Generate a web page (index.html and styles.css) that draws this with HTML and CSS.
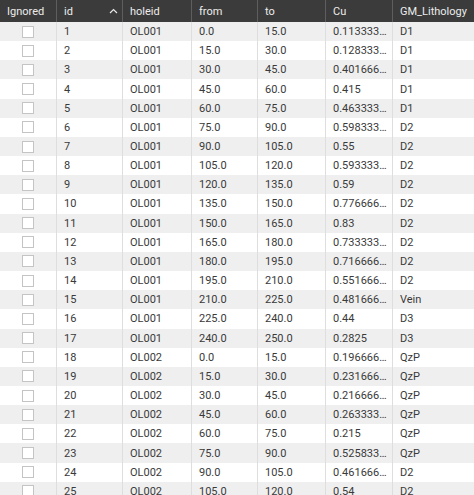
FILE: index.html
```html
<!DOCTYPE html>
<html>
<head>
<meta charset="utf-8">
<link rel="stylesheet" href="styles.css">
</head>
<body>
<div class="grid">
  <div class="row head">
    <div class="cell">Ignored</div>
    <div class="cell sorted">id<svg class="sort" width="9" height="6" viewBox="0 0 9 6"><path d="M1 5 L4.5 1.5 L8 5" fill="none" stroke="#e8e8e8" stroke-width="1.2"/></svg></div>
    <div class="cell">holeid</div>
    <div class="cell">from</div>
    <div class="cell">to</div>
    <div class="cell">Cu</div>
    <div class="cell">GM_Lithology</div>
  </div>
  <div class="row"><div class="cell chk"><span class="box"></span></div><div class="cell">1</div><div class="cell">OL001</div><div class="cell">0.0</div><div class="cell">15.0</div><div class="cell">0.113333…</div><div class="cell">D1</div></div>
  <div class="row"><div class="cell chk"><span class="box"></span></div><div class="cell">2</div><div class="cell">OL001</div><div class="cell">15.0</div><div class="cell">30.0</div><div class="cell">0.128333…</div><div class="cell">D1</div></div>
  <div class="row"><div class="cell chk"><span class="box"></span></div><div class="cell">3</div><div class="cell">OL001</div><div class="cell">30.0</div><div class="cell">45.0</div><div class="cell">0.401666…</div><div class="cell">D1</div></div>
  <div class="row"><div class="cell chk"><span class="box"></span></div><div class="cell">4</div><div class="cell">OL001</div><div class="cell">45.0</div><div class="cell">60.0</div><div class="cell">0.415</div><div class="cell">D1</div></div>
  <div class="row"><div class="cell chk"><span class="box"></span></div><div class="cell">5</div><div class="cell">OL001</div><div class="cell">60.0</div><div class="cell">75.0</div><div class="cell">0.463333…</div><div class="cell">D1</div></div>
  <div class="row"><div class="cell chk"><span class="box"></span></div><div class="cell">6</div><div class="cell">OL001</div><div class="cell">75.0</div><div class="cell">90.0</div><div class="cell">0.598333…</div><div class="cell">D2</div></div>
  <div class="row"><div class="cell chk"><span class="box"></span></div><div class="cell">7</div><div class="cell">OL001</div><div class="cell">90.0</div><div class="cell">105.0</div><div class="cell">0.55</div><div class="cell">D2</div></div>
  <div class="row"><div class="cell chk"><span class="box"></span></div><div class="cell">8</div><div class="cell">OL001</div><div class="cell">105.0</div><div class="cell">120.0</div><div class="cell">0.593333…</div><div class="cell">D2</div></div>
  <div class="row"><div class="cell chk"><span class="box"></span></div><div class="cell">9</div><div class="cell">OL001</div><div class="cell">120.0</div><div class="cell">135.0</div><div class="cell">0.59</div><div class="cell">D2</div></div>
  <div class="row"><div class="cell chk"><span class="box"></span></div><div class="cell">10</div><div class="cell">OL001</div><div class="cell">135.0</div><div class="cell">150.0</div><div class="cell">0.776666…</div><div class="cell">D2</div></div>
  <div class="row"><div class="cell chk"><span class="box"></span></div><div class="cell">11</div><div class="cell">OL001</div><div class="cell">150.0</div><div class="cell">165.0</div><div class="cell">0.83</div><div class="cell">D2</div></div>
  <div class="row"><div class="cell chk"><span class="box"></span></div><div class="cell">12</div><div class="cell">OL001</div><div class="cell">165.0</div><div class="cell">180.0</div><div class="cell">0.733333…</div><div class="cell">D2</div></div>
  <div class="row"><div class="cell chk"><span class="box"></span></div><div class="cell">13</div><div class="cell">OL001</div><div class="cell">180.0</div><div class="cell">195.0</div><div class="cell">0.716666…</div><div class="cell">D2</div></div>
  <div class="row"><div class="cell chk"><span class="box"></span></div><div class="cell">14</div><div class="cell">OL001</div><div class="cell">195.0</div><div class="cell">210.0</div><div class="cell">0.551666…</div><div class="cell">D2</div></div>
  <div class="row"><div class="cell chk"><span class="box"></span></div><div class="cell">15</div><div class="cell">OL001</div><div class="cell">210.0</div><div class="cell">225.0</div><div class="cell">0.481666…</div><div class="cell">Vein</div></div>
  <div class="row"><div class="cell chk"><span class="box"></span></div><div class="cell">16</div><div class="cell">OL001</div><div class="cell">225.0</div><div class="cell">240.0</div><div class="cell">0.44</div><div class="cell">D3</div></div>
  <div class="row"><div class="cell chk"><span class="box"></span></div><div class="cell">17</div><div class="cell">OL001</div><div class="cell">240.0</div><div class="cell">250.0</div><div class="cell">0.2825</div><div class="cell">D3</div></div>
  <div class="row"><div class="cell chk"><span class="box"></span></div><div class="cell">18</div><div class="cell">OL002</div><div class="cell">0.0</div><div class="cell">15.0</div><div class="cell">0.196666…</div><div class="cell">QzP</div></div>
  <div class="row"><div class="cell chk"><span class="box"></span></div><div class="cell">19</div><div class="cell">OL002</div><div class="cell">15.0</div><div class="cell">30.0</div><div class="cell">0.231666…</div><div class="cell">QzP</div></div>
  <div class="row"><div class="cell chk"><span class="box"></span></div><div class="cell">20</div><div class="cell">OL002</div><div class="cell">30.0</div><div class="cell">45.0</div><div class="cell">0.216666…</div><div class="cell">QzP</div></div>
  <div class="row"><div class="cell chk"><span class="box"></span></div><div class="cell">21</div><div class="cell">OL002</div><div class="cell">45.0</div><div class="cell">60.0</div><div class="cell">0.263333…</div><div class="cell">QzP</div></div>
  <div class="row"><div class="cell chk"><span class="box"></span></div><div class="cell">22</div><div class="cell">OL002</div><div class="cell">60.0</div><div class="cell">75.0</div><div class="cell">0.215</div><div class="cell">QzP</div></div>
  <div class="row"><div class="cell chk"><span class="box"></span></div><div class="cell">23</div><div class="cell">OL002</div><div class="cell">75.0</div><div class="cell">90.0</div><div class="cell">0.525833…</div><div class="cell">QzP</div></div>
  <div class="row"><div class="cell chk"><span class="box"></span></div><div class="cell">24</div><div class="cell">OL002</div><div class="cell">90.0</div><div class="cell">105.0</div><div class="cell">0.461666…</div><div class="cell">D2</div></div>
  <div class="row"><div class="cell chk"><span class="box"></span></div><div class="cell">25</div><div class="cell">OL002</div><div class="cell">105.0</div><div class="cell">120.0</div><div class="cell">0.54</div><div class="cell">D2</div></div>
</div>
</body>
</html>
```
FILE: styles.css
```css
html, body {
  margin: 0;
  padding: 0;
  background: #ffffff;
  overflow: hidden;
}
.grid {
  width: 474px;
  font-family: Roboto, "Liberation Sans", sans-serif;
  font-size: 11px;
  color: #3a3a3a;
}
.row {
  display: grid;
  grid-template-columns: 57px 66px 69px 66px 68px 67px 81px;
  height: 19.17px;
}
.row:nth-child(even) {
  background: #efefef;
}
.row.head {
  height: 22px;
  background: #3b3b3b;
  color: #ececec;
}
.cell {
  display: flex;
  align-items: center;
  padding: 0 7px;
  border-right: 1px solid #dedede;
  white-space: nowrap;
  overflow: hidden;
}
.cell:last-child {
  border-right: none;
}
.head .cell {
  border-right: 1px solid #5e5e5e;
}
.head .cell:last-child {
  border-right: none;
}
.sorted {
  justify-content: space-between;
}
.sort {
  margin-right: -3px;
}
.chk {
  justify-content: center;
}
.box {
  width: 10px;
  height: 10px;
  border: 1px solid #c4c4c4;
  background: #ffffff;
}
```
